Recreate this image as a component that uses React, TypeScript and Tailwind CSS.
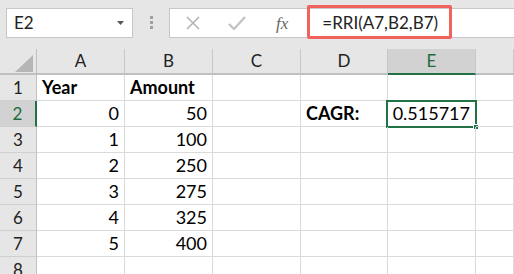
import React from 'react'

const COLS = [
  { key: 'A', w: 'w-[88px]', label: 'A' },
  { key: 'B', w: 'w-[88px]', label: 'B' },
  { key: 'C', w: 'w-[88px]', label: 'C' },
  { key: 'D', w: 'w-[87px]', label: 'D' },
  { key: 'E', w: 'w-[88px]', label: 'E' },
  { key: 'F', w: 'flex-1', label: '' },
]

type Cell = { text: string; bold?: boolean; right?: boolean }

const ROWS: Record<number, Record<string, Cell>> = {
  1: { A: { text: 'Year', bold: true }, B: { text: 'Amount', bold: true } },
  2: {
    A: { text: '0', right: true },
    B: { text: '50', right: true },
    D: { text: 'CAGR:', bold: true },
    E: { text: '0.515717', right: true },
  },
  3: { A: { text: '1', right: true }, B: { text: '100', right: true } },
  4: { A: { text: '2', right: true }, B: { text: '250', right: true } },
  5: { A: { text: '3', right: true }, B: { text: '275', right: true } },
  6: { A: { text: '4', right: true }, B: { text: '325', right: true } },
  7: { A: { text: '5', right: true }, B: { text: '400', right: true } },
  8: {},
}

function Toolbar() {
  return (
    <div className="flex items-start h-[49px] bg-[#e6e6e6] pt-[8px] pl-[6px]">
      {/* name box */}
      <div className="flex items-center w-[127px] h-[30px] bg-white border border-[#c6c6c6] pl-[7px] pr-[8px]">
        <span className="flex-1 text-[17px] text-[#222]">E2</span>
        <svg width="7" height="4" viewBox="0 0 7 4">
          <path d="M0 0h7L3.5 4z" fill="#555" />
        </svg>
      </div>
      {/* grip */}
      <div className="flex flex-col gap-[2px] ml-[17px] mt-[8px]">
        <div className="w-[3px] h-[3px] bg-[#a0a0a0]" />
        <div className="w-[3px] h-[3px] bg-[#a0a0a0]" />
        <div className="w-[3px] h-[3px] bg-[#a0a0a0]" />
      </div>
      {/* formula bar */}
      <div className="relative flex items-center flex-1 h-[30px] ml-[16px] bg-white border border-[#c6c6c6] border-r-0">
        <svg className="ml-[16px]" width="14" height="14" viewBox="0 0 14 14">
          <path d="M1 1l12 12M13 1L1 13" stroke="#b4b4b4" strokeWidth="1.6" />
        </svg>
        <svg className="ml-[28px]" width="18" height="14" viewBox="0 0 18 14">
          <path d="M1 8l5 5L17 1" stroke="#c4c4c4" strokeWidth="2.4" fill="none" />
        </svg>
        <span className="ml-[30px] text-[17px] italic text-[#666] font-['Liberation_Serif',serif] leading-none">
          fx
        </span>
        <span className="ml-[34px] text-[17px] text-[#222]">=RRI(A7,B2,B7)</span>
        {/* highlight annotation */}
        <div className="absolute left-[137px] top-[-4px] w-[145px] h-[34px] border-[3px] border-[#f0625b] rounded-[2px]" />
      </div>
    </div>
  )
}

function HeaderRow() {
  return (
    <div className="flex h-[26px] bg-[#e6e6e6] border-b-2 border-[#c0c0c0]">
      <div className="relative w-[37px] border-r border-[#c0c0c0]">
        <svg className="absolute left-[15px] top-[6px]" width="18" height="17" viewBox="0 0 18 17">
          <path d="M18 0V17H0z" fill="#b6b6b6" />
        </svg>
      </div>
      {COLS.map(c => (
        <div
          key={c.key}
          className={`${c.w} flex items-center justify-center text-[17px] border-r border-[#c8c8c8] ${
            c.key === 'E' ? 'bg-[#d2d2d2] text-[#1e6b3f] border-b-2 border-b-[#217346] -mb-[2px]' : 'text-[#222]'
          }`}
        >
          {c.label}
        </div>
      ))}
    </div>
  )
}

function DataRow({ n }: { n: number }) {
  const row = ROWS[n]
  const active = n === 2
  return (
    <div className="flex h-[26px]">
      <div
        className={`w-[37px] flex items-center justify-center text-[17px] border-b border-[#cfcfcf] ${
          active
            ? 'bg-[#d2d2d2] text-[#1e6b3f] border-r-2 border-r-[#217346]'
            : 'bg-[#e6e6e6] text-[#222] border-r border-r-[#c0c0c0]'
        }`}
      >
        {n}
      </div>
      {COLS.map(c => {
        const cell = row[c.key]
        const sel = active && c.key === 'E'
        return (
          <div
            key={c.key}
            className={`${c.w} relative flex items-center border-r border-b border-[#dadada] px-[5px] text-[18px] text-black ${
              cell?.right ? 'justify-end' : 'justify-start'
            }`}
          >
            {cell && <span className={cell.bold ? 'font-bold' : ''}>{cell.text}</span>}
            {sel && (
              <>
                <div className="absolute left-[-2px] top-[-1px] right-[-2px] bottom-[-2px] border-2 border-[#217346]" />
                <div className="absolute right-[-4px] bottom-[-4px] w-[6px] h-[6px] bg-[#217346] border border-white" />
              </>
            )}
          </div>
        )
      })}
    </div>
  )
}

export default function App() {
  return (
    <div className="w-[514px] h-[274px] overflow-hidden bg-white font-['Lato',sans-serif]">
      <Toolbar />
      <HeaderRow />
      {[1, 2, 3, 4, 5, 6, 7, 8].map(n => (
        <DataRow key={n} n={n} />
      ))}
    </div>
  )
}
